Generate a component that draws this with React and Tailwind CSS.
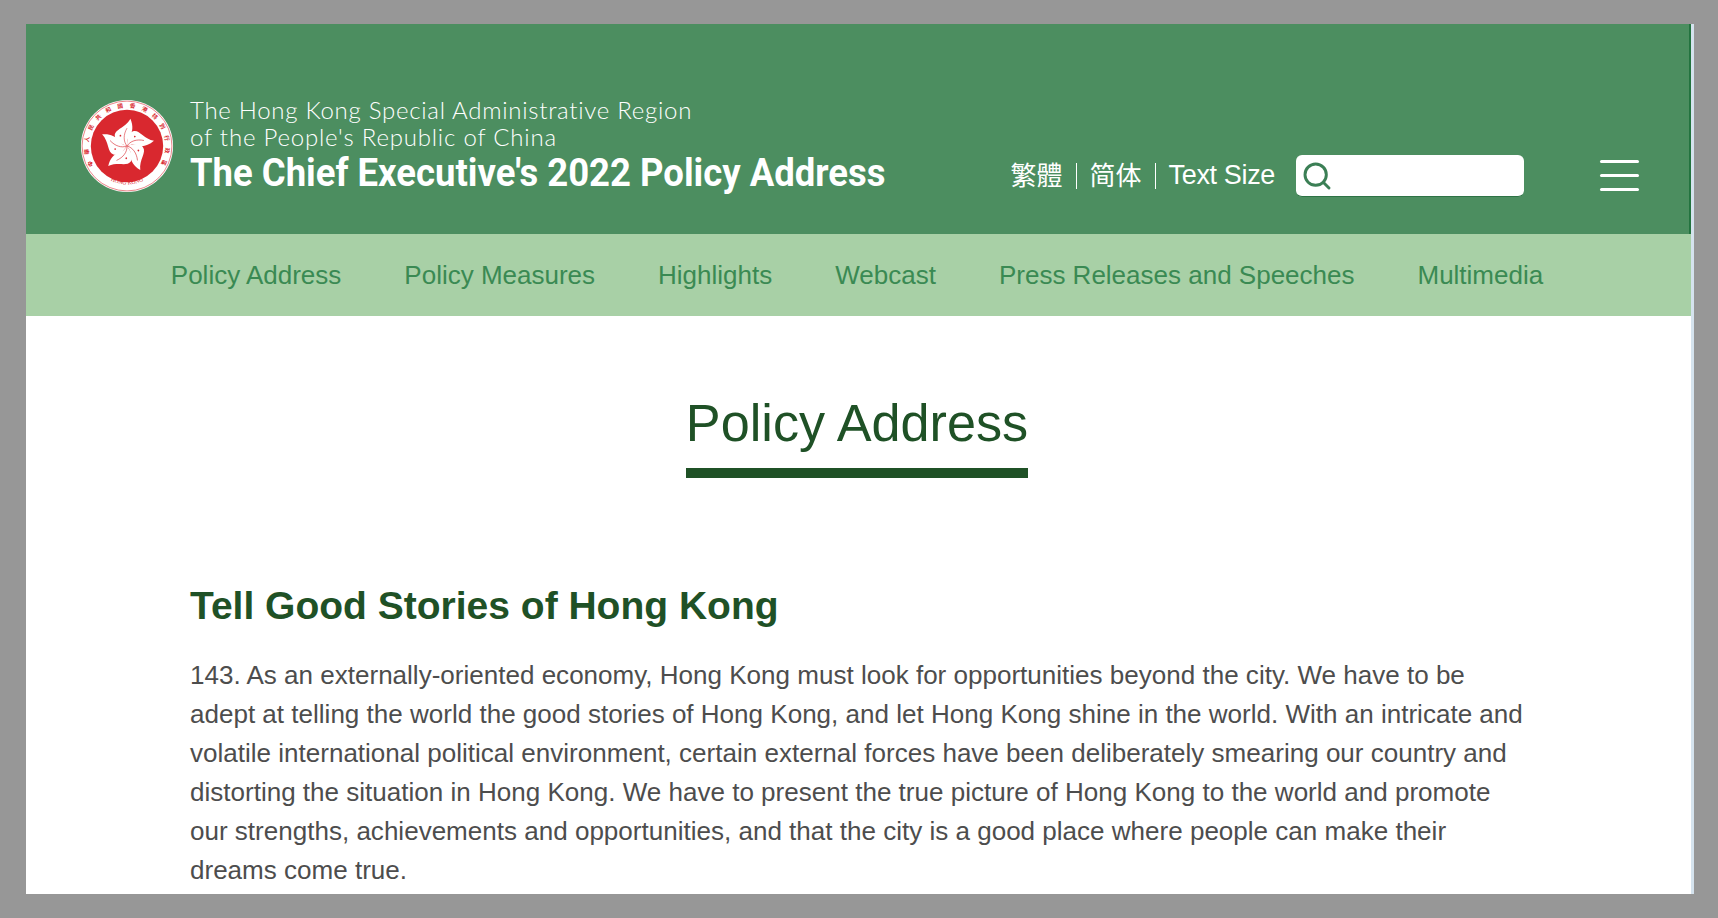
import React from 'react';
import { Search } from 'lucide-react';

const NAV_ITEMS = ['Policy Address', 'Policy Measures', 'Highlights', 'Webcast', 'Press Releases and Speeches', 'Multimedia'];

const ARIAL = 'font-["Liberation_Sans",Arial,sans-serif]';

const Petal = ({ angle }) => (
  <g transform={`rotate(${angle} 50 50)`}>
    <path
      d="M50 50 C45 48 37 46 37 39 C37 32 48 31 53.6 21 C57 29 56 35 53 39 C50 42 50 46 50 50 Z"
      fill="#fff"
    />
    <path d="M50 50 C46 45 46 38 50 31" fill="none" stroke="#d9282f" strokeWidth="0.6" />
    <circle cx="43" cy="39" r="0.9" fill="#d9282f" />
  </g>
);

const Emblem = () => (
  <svg viewBox="0 0 100 100" className="w-[94px] h-[94px] shrink-0">
    <defs>
      <path id="ringTop" d="M 14.5 70.5 A 41 41 0 1 1 85.5 70.5" />
      <path id="ringBottom" d="M 12 66 A 41.5 41.5 0 0 0 88 66" />
    </defs>
    <circle cx="50" cy="50" r="49" fill="#fff" />
    <circle cx="50" cy="50" r="47.8" fill="none" stroke="#d9282f" strokeWidth="0.6" />
    <circle cx="50" cy="50" r="38.5" fill="#d9282f" />
    <text fontSize="6" fontWeight="700" fill="#d9282f" style={{ fontFamily: '"Noto Sans CJK TC", serif' }}>
      <textPath href="#ringTop" textLength="170" lengthAdjust="spacing">中華人民共和國香港特別行政區</textPath>
    </text>
    <text fontSize="6" fill="#d9282f" style={{ fontFamily: '"Liberation Serif", serif' }}>
      <textPath href="#ringBottom" startOffset="50%" textAnchor="middle">HONG KONG</textPath>
    </text>
    <circle cx="12" cy="68" r="1" fill="#d9282f" />
    <circle cx="88" cy="68" r="1" fill="#d9282f" />
    {[0, 72, 144, 216, 288].map((a) => <Petal key={a} angle={a} />)}
  </svg>
);

const Divider = () => <span className="w-px h-[26px] bg-white mx-[13px]" />;

export default function App() {
  return (
    <div className="w-[1718px] h-[918px] bg-[#979797] pt-[24px] pl-[26px] overflow-hidden">
      <div className="w-[1668px] h-[870px] flex flex-col bg-white overflow-hidden border-r-[3px] border-[#d5e3ee]">
        <header className="h-[210px] shrink-0 bg-[#4c8e60] border-r-2 border-[#23733f] flex items-start pl-[54px]">
          <div className="mt-[75px]">
            <Emblem />
          </div>
          <div className="ml-[16px] mt-[72px] text-white">
            <p className='font-["Lato",sans-serif] font-light text-[24px] leading-[27px] tracking-[0.72px]'>The Hong Kong Special Administrative Region</p>
            <p className='font-["Lato",sans-serif] font-light text-[24px] leading-[27px] tracking-[0.8px]'>of the People's Republic of China</p>
            <h1 className='font-["Roboto",sans-serif] font-bold text-[38px] leading-[44px] mt-[1px] origin-left scale-x-[0.96] whitespace-nowrap'>The Chief Executive's 2022 Policy Address</h1>
          </div>
          <div className="ml-auto mt-[131px] flex items-center text-white mr-[50px]">
            <span className='font-["Noto_Sans_CJK_TC",sans-serif] text-[26px] leading-[30px] mb-[5px]'>繁體</span>
            <Divider />
            <span className='font-["Noto_Sans_CJK_SC",sans-serif] text-[26px] leading-[30px] mb-[5px]'>简体</span>
            <Divider />
            <span className={`${ARIAL} text-[27px] leading-[30px] tracking-[-0.35px] mb-[2px]`}>Text Size</span>
            <div className="ml-[21px] w-[228px] h-[42px] bg-white rounded-[6px] flex items-center pl-[5px] border-b border-[#2e7346]">
              <Search className="w-[32px] h-[32px] text-[#3b7f55]" strokeWidth={2.2} />
            </div>
            <div className="ml-[76px] w-[39px] flex flex-col gap-[11px] -mt-[1px]">
              <span className="h-[3px] bg-white rounded-sm" />
              <span className="h-[3px] bg-white rounded-sm" />
              <span className="h-[3px] bg-white rounded-sm" />
            </div>
          </div>
        </header>

        <nav className={`h-[82px] shrink-0 bg-[#a8d0a6] flex items-center justify-center gap-[63px] pr-[3px] ${ARIAL} text-[26px] text-[#3a8a53]`}>
          {NAV_ITEMS.map((item) => (
            <a key={item} className="whitespace-nowrap">{item}</a>
          ))}
        </nav>

        <main className={`flex-1 ${ARIAL} pl-[164px] pr-[165px]`}>
          <div className="flex justify-center pt-[77px] pr-[2px]">
            <h2 className="text-[#1f5126] text-[52.2px] leading-[60px] border-b-[10px] border-[#1f5126] pb-[15px]">Policy Address</h2>
          </div>
          <h3 className="mt-[105px] text-[#1f5126] text-[39px] leading-[46px] font-bold">Tell Good Stories of Hong Kong</h3>
          <p className="mt-[27px] text-[#4d4d4d] text-[26.04px] leading-[39px] w-[1340px]">
            143. As an externally-oriented economy, Hong Kong must look for opportunities beyond the city. We have to be adept at telling the world the good stories of Hong Kong, and let Hong Kong shine in the world. With an intricate and volatile international political environment, certain external forces have been deliberately smearing our country and distorting the situation in Hong Kong. We have to present the true picture of Hong Kong to the world and promote our strengths, achievements and opportunities, and that the city is a good place where people can make their dreams come true.
          </p>
        </main>
      </div>
    </div>
  );
}
